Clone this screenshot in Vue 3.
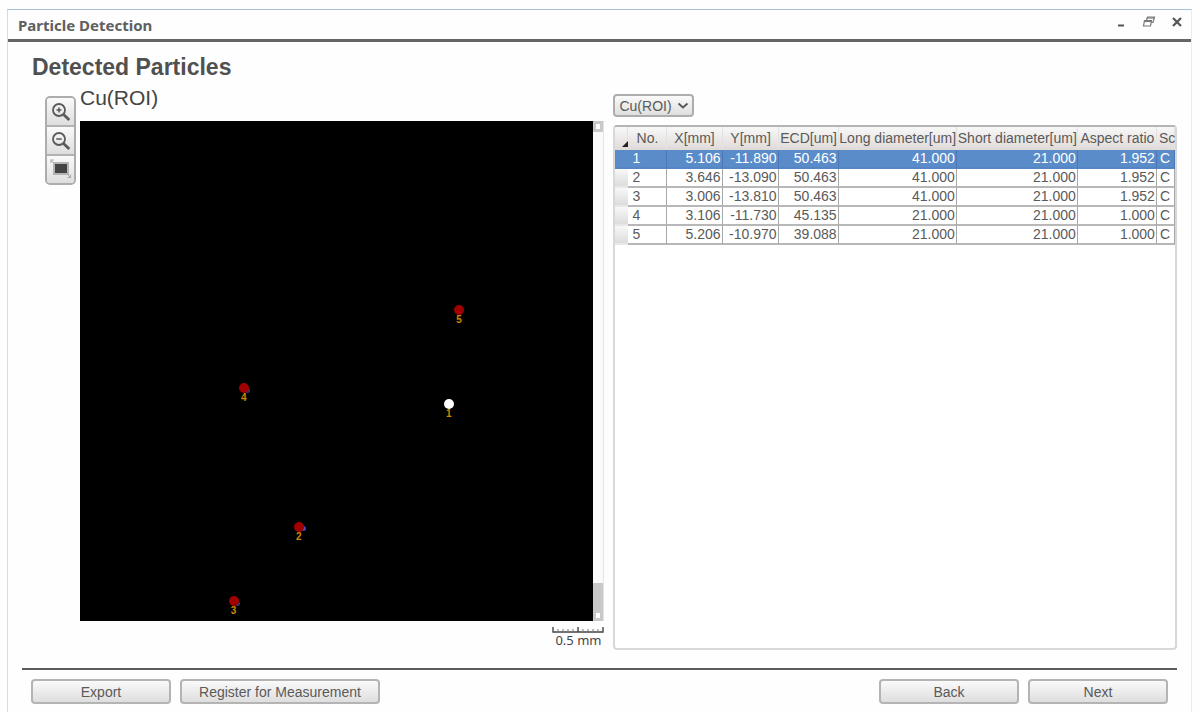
<script setup>
import { ref } from 'vue'

const element = ref('Cu(ROI)')
const selected = ref(1)

const columns = [
  { key: 'no', label: 'No.' },
  { key: 'x', label: 'X[mm]' },
  { key: 'y', label: 'Y[mm]' },
  { key: 'ecd', label: 'ECD[um]' },
  { key: 'long', label: 'Long diameter[um]' },
  { key: 'short', label: 'Short diameter[um]' },
  { key: 'aspect', label: 'Aspect ratio' },
  { key: 'sc', label: 'Sc' }
]

const rows = [
  { no: 1, x: '5.106', y: '-11.890', ecd: '50.463', long: '41.000', short: '21.000', aspect: '1.952', sc: 'C' },
  { no: 2, x: '3.646', y: '-13.090', ecd: '50.463', long: '41.000', short: '21.000', aspect: '1.952', sc: 'C' },
  { no: 3, x: '3.006', y: '-13.810', ecd: '50.463', long: '41.000', short: '21.000', aspect: '1.952', sc: 'C' },
  { no: 4, x: '3.106', y: '-11.730', ecd: '45.135', long: '21.000', short: '21.000', aspect: '1.000', sc: 'C' },
  { no: 5, x: '5.206', y: '-10.970', ecd: '39.088', long: '21.000', short: '21.000', aspect: '1.000', sc: 'C' }
]

// Marker positions as percentages of the map area
const particles = [
  { no: 1, left: 71.8, top: 56.6 },
  { no: 2, left: 42.6, top: 81.2, halo: 'halo-far' },
  { no: 3, left: 29.9, top: 96, halo: 'halo-near' },
  { no: 4, left: 31.9, top: 53.3, halo: 'halo-near' },
  { no: 5, left: 73.8, top: 37.8 }
]
</script>

<template>
  <div class="page">
    <div class="window">
      <header class="titlebar">
        <span class="title">Particle Detection</span>
        <div class="controls">
          <button type="button" aria-label="Minimize">
            <svg width="14" height="14" viewBox="0 0 14 14"><path d="M4 10.5h6" stroke="#555" stroke-width="2" /></svg>
          </button>
          <button type="button" aria-label="Restore">
            <svg width="14" height="14" viewBox="0 0 14 14" fill="none" stroke="#777" stroke-width="1.2">
              <path d="M4.500 5l1-3h7l-1.500 5.500h-1.500" /><path d="M5 3h7.500" /><path d="M2.500 5.500h7L8.500 11h-7z" fill="#fff" /><path d="M2.500 6.500h7" />
            </svg>
          </button>
          <button type="button" aria-label="Close">
            <svg width="14" height="14" viewBox="0 0 14 14"><path d="M3 3l8 8M11 3l-8 8" stroke="#555" stroke-width="2.2" /></svg>
          </button>
        </div>
      </header>

      <h1>Detected Particles</h1>

      <main class="content">
        <div class="toolbar">
          <button type="button" aria-label="Zoom in">
            <svg width="22" height="22" viewBox="0 0 22 22" fill="none" stroke="#5a5a5a">
              <circle cx="9" cy="9" r="6" stroke-width="1.8" /><path d="M9 6.500v5M6.500 9h5" stroke-width="1.6" /><path d="M13.500 13.500l5.800 5.600" stroke-width="2.8" />
            </svg>
          </button>
          <button type="button" aria-label="Zoom out">
            <svg width="22" height="22" viewBox="0 0 22 22" fill="none" stroke="#5a5a5a">
              <circle cx="9" cy="9" r="6" stroke-width="1.8" /><path d="M6.200 9h5.600" stroke-width="1.6" /><path d="M13.500 13.500l5.800 5.600" stroke-width="2.8" />
            </svg>
          </button>
          <button type="button" aria-label="Fit to window">
            <svg width="22" height="22" viewBox="0 0 22 22" fill="none">
              <rect x="3" y="3" width="16" height="13" fill="#b4b4b4" />
              <rect x="5" y="5" width="12" height="9" fill="#444" />
              <path d="M1 4V1h3M20.500 15.500v3h-3" stroke="#aaa" stroke-width="1.2" />
              <path d="M1.500 1.500l3 3M17 15l3 3" stroke="#aaa" />
            </svg>
          </button>
        </div>

        <section class="map">
          <h2>Cu(ROI)</h2>
          <div class="viewport">
            <div class="canvas">
              <div
                v-for="p in particles"
                :key="p.no"
                class="particle"
                :class="[{ active: p.no === selected }, p.halo]"
                :style="{ left: p.left + '%', top: p.top + '%' }"
              >
                <i class="dot"></i>
                <span>{{ p.no }}</span>
              </div>
            </div>
            <div class="scroll">
              <i class="arrow"></i>
              <div class="thumb"><i class="arrow"></i></div>
            </div>
          </div>
          <div class="scale">
            <svg width="52" height="6" viewBox="0 0 52 6" fill="none" stroke="#444">
              <path d="M1 0v5h50V0M26 0v5" stroke-width="1.4" />
              <path d="M6 2v3M11 2v3M16 2v3M21 2v3M31 2v3M36 2v3M41 2v3M46 2v3" stroke="#777" />
            </svg>
            <span>0.5 mm</span>
          </div>
        </section>

        <section class="results">
          <div class="picker">
            <select v-model="element" aria-label="Element">
              <option>Cu(ROI)</option>
            </select>
            <svg width="12" height="8" viewBox="0 0 12 8" fill="none"><path d="M1.500 1.500L6 5.500l4.500-4" stroke="#555" stroke-width="1.800" /></svg>
          </div>
          <div class="grid">
            <table>
              <colgroup>
                <col class="w-mark" />
                <col v-for="c in columns" :key="c.key" :class="'w-' + c.key" />
              </colgroup>
              <thead>
                <tr>
                  <th class="mark">
                    <svg width="6" height="6" viewBox="0 0 6 6"><path d="M6 0v6H0z" fill="#222" /></svg>
                  </th>
                  <th v-for="c in columns" :key="c.key" scope="col" :class="c.key">{{ c.label }}</th>
                </tr>
              </thead>
              <tbody>
                <tr
                  v-for="r in rows"
                  :key="r.no"
                  :class="{ selected: r.no === selected }"
                  @click="selected = r.no"
                >
                  <td class="mark"></td>
                  <td v-for="c in columns" :key="c.key" :class="c.key">{{ r[c.key] }}</td>
                </tr>
              </tbody>
            </table>
          </div>
        </section>
      </main>

      <footer class="actions">
        <button type="button" class="btn">Export</button>
        <button type="button" class="btn btn-long">Register for Measurement</button>
        <span class="spacer"></span>
        <button type="button" class="btn">Back</button>
        <button type="button" class="btn">Next</button>
      </footer>
    </div>
  </div>
</template>

<style>
body {
  margin: 0;
  background: #fefefe;
}
</style>

<style scoped>
.page {
  box-sizing: border-box;
  min-height: 100vh;
  padding: 9px 8px 0 7px;
  display: flex;
  font-family: "Liberation Sans", Arial, sans-serif;
  font-size: 14px;
  color: #5a5a5a;
}
.window {
  flex: 1;
  min-width: 0;
  display: flex;
  flex-direction: column;
  border: 1px solid #c8def5;
  border-top-color: #a9bdd8;
  border-right-color: #e6edf5;
  border-bottom: 0;
}
button {
  font: inherit;
  color: inherit;
  cursor: pointer;
}
.titlebar {
  display: flex;
  align-items: center;
  justify-content: space-between;
  height: 29px;
  padding: 0 7px 0 10px;
  border-bottom: 3px solid #656565;
}
.title {
  font: bold 15px/20px "Noto Sans", sans-serif;
  color: #606060;
}
.controls {
  display: flex;
  gap: 14px;
  padding-bottom: 6px;
}
.controls button {
  display: flex;
  padding: 0;
  border: 0;
  background: none;
}
h1 {
  margin: 11px 0 3px 24px;
  font-size: 23px;
  line-height: 28px;
  color: #505050;
}
.content {
  flex: 1;
  display: grid;
  grid-template-columns: 31px minmax(0, 528fr) minmax(0, 572fr);
  padding: 0 14px 0 37px;
}
.toolbar {
  align-self: start;
  margin-top: 12px;
  box-sizing: border-box;
  border: 2px solid #adadad;
  border-radius: 5px;
  overflow: hidden;
}
.toolbar button {
  display: flex;
  align-items: center;
  justify-content: center;
  box-sizing: border-box;
  width: 100%;
  height: 29px;
  padding: 0;
  border: 0;
  border-bottom: 2px solid #b2b2b2;
  background: linear-gradient(#fafafa, #dedede);
}
.toolbar button:last-child {
  height: 27px;
  border-bottom: 0;
}
.map {
  display: flex;
  flex-direction: column;
  margin-left: 4px;
}
h2 {
  margin: 0 0 9px;
  font-size: 21px;
  line-height: 28px;
  font-weight: normal;
  color: #444;
}
.viewport {
  flex: 1;
  display: flex;
}
.canvas {
  position: relative;
  flex: 1;
  background: #000;
  overflow: hidden;
}
.particle {
  position: absolute;
  width: 10px;
  height: 20px;
  margin: -5px 0 0 -5px;
  text-align: center;
}
.dot {
  display: block;
  position: relative;
  z-index: 1;
  width: 10px;
  height: 10px;
  border-radius: 50%;
  background: #a00000;
}
.active .dot {
  background: #fff;
}
.halo-near::before,
.halo-far::before {
  content: "";
  position: absolute;
  left: 6px;
  top: 5px;
  width: 5px;
  height: 5px;
  border-radius: 50%;
  background: #353575;
}
.halo-far::before {
  left: 7px;
  top: 4px;
  background: #4848b0;
}
.particle span {
  display: block;
  font-size: 10px;
  line-height: 10px;
  font-weight: bold;
  color: #d08a00;
}
.scroll {
  display: flex;
  flex-direction: column;
  justify-content: space-between;
  box-sizing: border-box;
  width: 11px;
  border-right: 1px solid #e4e4e4;
  background: #fafafa;
}
.arrow {
  box-sizing: border-box;
  display: block;
  width: 10px;
  height: 11px;
  border: 3px solid #c8c8c8;
  background: #fff;
}
.thumb {
  display: flex;
  align-items: flex-end;
  height: 38px;
  background: #c8c8c8;
}
.scale {
  align-self: flex-end;
  display: flex;
  flex-direction: column;
  align-items: center;
  height: 23px;
  padding-top: 6px;
}
.scale svg {
  flex: none;
}
.scale span {
  font: 13px/15px "Noto Sans", sans-serif;
  color: #444;
}
.results {
  display: flex;
  flex-direction: column;
  align-items: flex-start;
  gap: 8px;
  margin-left: 9px;
  padding-top: 10px;
}
.picker {
  position: relative;
  display: flex;
}
.picker select {
  appearance: none;
  box-sizing: border-box;
  width: 81px;
  height: 23px;
  padding: 0 4px;
  border: 2px solid #adadad;
  border-radius: 4px;
  background: linear-gradient(#fafafa, #dfdfdf);
  font: 14px "Liberation Sans", Arial, sans-serif;
  color: #5a5a5a;
}
.picker svg {
  position: absolute;
  right: 5px;
  top: 8px;
  pointer-events: none;
}
.grid {
  flex: 1;
  box-sizing: border-box;
  width: 100%;
  border: 2px solid #d8d8d8;
  border-top-color: #b4b4b4;
  border-radius: 4px;
  background: #fff;
  overflow: hidden;
}
table {
  table-layout: fixed;
  width: 100%;
  border-collapse: separate;
  border-spacing: 0;
}
.w-mark { width: 13px; }
.w-no { width: 38px; }
.w-x { width: 56px; }
.w-y { width: 56px; }
.w-ecd { width: 60px; }
.w-long { width: 118px; }
.w-short { width: 121px; }
.w-aspect { width: 79px; }
.w-sc { width: 18px; }
th {
  height: 21px;
  padding: 0 0 2px;
  font-weight: normal;
  white-space: nowrap;
  overflow: hidden;
  background: linear-gradient(#f8f8f8, #dfdad8);
  box-shadow: inset -1px 0 #e2e2e2;
}
th.mark {
  vertical-align: bottom;
  text-align: right;
  line-height: 6px;
  padding-bottom: 3px;
  height: 20px;
}
th.sc {
  text-align: left;
  padding-left: 2px;
}
td {
  box-sizing: border-box;
  height: 19px;
  padding: 0 1px 0 0;
  border-right: 1px solid #a8a8a8;
  border-bottom: 2px solid #b8b8b8;
  line-height: 17px;
  text-align: right;
}
td.no,
td.sc {
  text-align: left;
  padding-left: 4px;
}
td.sc {
  padding-left: 3px;
  padding-right: 0;
}
td.mark {
  border-right: 0;
  border-bottom-color: #e8e8e8;
  background: linear-gradient(#f8f8f8, #dcdcdc);
}
.selected td,
.selected td.mark {
  border-right-color: #4a78b4;
  border-bottom-color: #5585c4;
  background: #5b8cca;
  color: #fff;
}
.actions {
  display: flex;
  gap: 9px;
  margin: 18px 14px 0;
  padding: 9px 9px 8px;
  border-top: 2px solid #5c5c5c;
}
.spacer {
  flex: 1;
}
.btn {
  box-sizing: border-box;
  width: 140px;
  height: 25px;
  padding: 0;
  border: 2px solid #b4b4b4;
  border-radius: 4px;
  background: linear-gradient(#fafafa, #dedede);
}
.btn-long {
  width: 200px;
}
</style>
